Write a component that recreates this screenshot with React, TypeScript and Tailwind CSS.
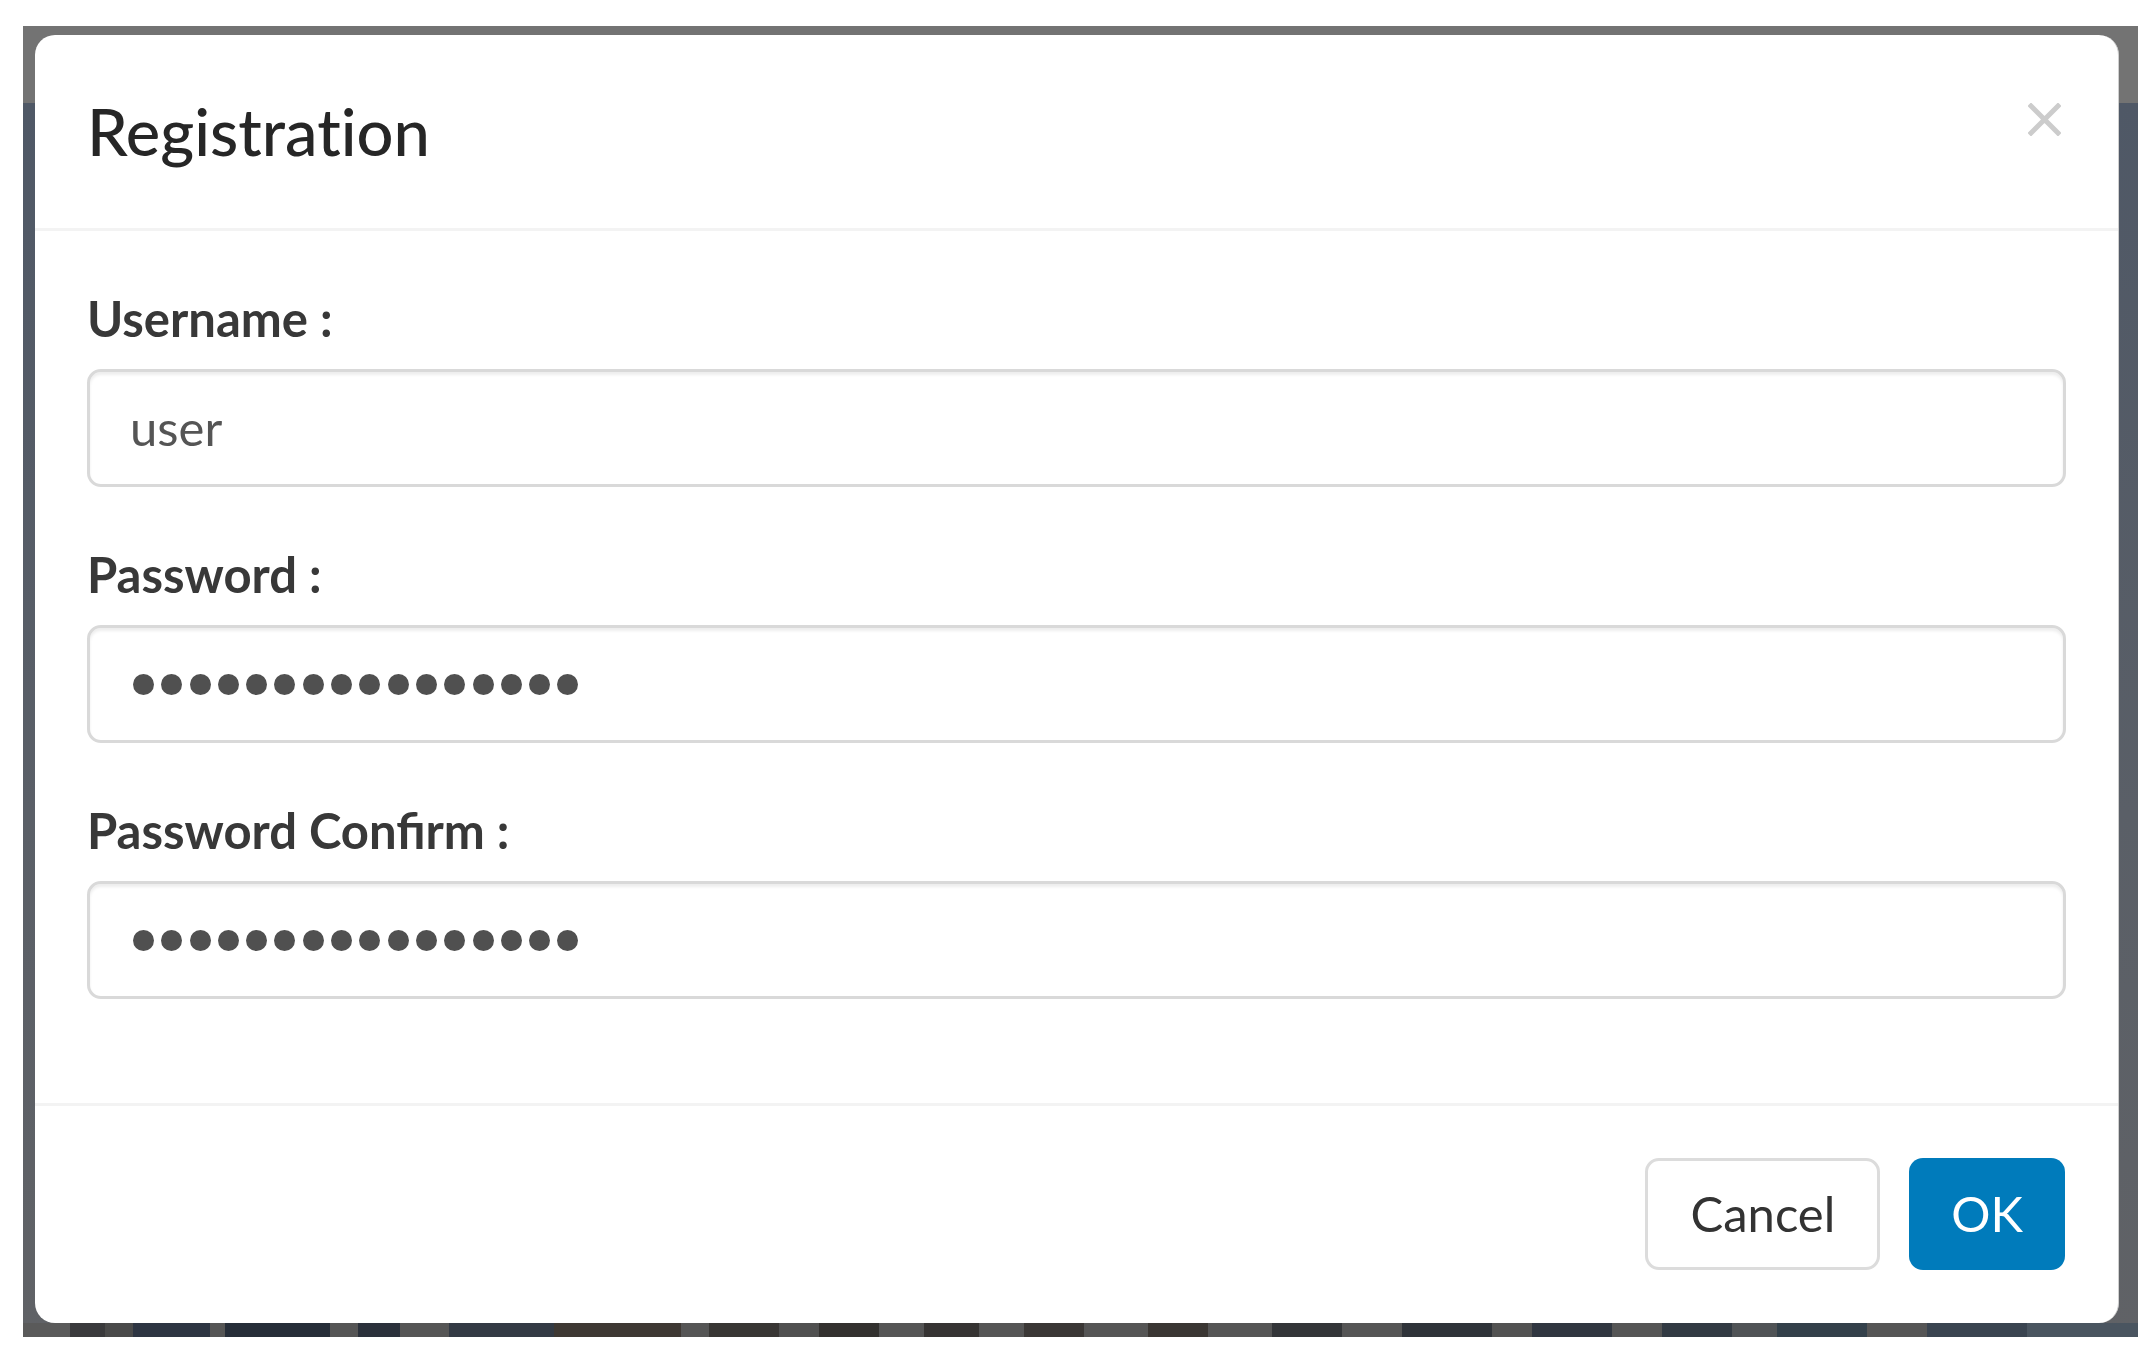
import React from "react";

const stripBlocks: { w: number; c: string }[] = [
  { w: 47, c: "#5a5a5a" },
  { w: 35, c: "#3a3a3c" },
  { w: 28, c: "#4a4a4a" },
  { w: 77, c: "#2e3542" },
  { w: 15, c: "#555555" },
  { w: 105, c: "#262d38" },
  { w: 28, c: "#555555" },
  { w: 42, c: "#2b313b" },
  { w: 49, c: "#555555" },
  { w: 105, c: "#333a44" },
  { w: 127, c: "#3e3833" },
  { w: 28, c: "#555555" },
  { w: 70, c: "#383634" },
  { w: 40, c: "#505050" },
  { w: 60, c: "#33312f" },
  { w: 45, c: "#555555" },
  { w: 55, c: "#363433" },
  { w: 45, c: "#555555" },
  { w: 60, c: "#3a3735" },
  { w: 64, c: "#555555" },
  { w: 60, c: "#3a3633" },
  { w: 64, c: "#555555" },
  { w: 70, c: "#333538" },
  { w: 60, c: "#555555" },
  { w: 90, c: "#2f3339" },
  { w: 40, c: "#525252" },
  { w: 80, c: "#303640" },
  { w: 50, c: "#555555" },
  { w: 70, c: "#323a43" },
  { w: 45, c: "#505356" },
  { w: 90, c: "#33404a" },
  { w: 60, c: "#555555" },
  { w: 100, c: "#3a4450" },
];

function Dots() {
  return (
    <div className="flex items-center gap-[7.3px] pl-[3px]">
      {Array.from({ length: 16 }).map((_, i) => (
        <span key={i} className="block w-[21px] h-[21px] rounded-full bg-[#505050]" />
      ))}
    </div>
  );
}

function Field({ label, children }: { label: string; children: React.ReactNode }) {
  return (
    <div className="mb-[52px]">
      <div className="h-[70px] leading-[70px] mb-[16px] text-[49px] font-bold text-[#383838]">{label}</div>
      <div className="h-[118px] border-[3px] border-[#d9d9d9] rounded-[14px] shadow-[inset_0_3px_3px_rgba(0,0,0,0.07)] flex items-center pl-[40px] pr-[40px]">
        {children}
      </div>
    </div>
  );
}

export default function App() {
  return (
    <div className="w-[2155px] h-[1356px] bg-white pt-[26px] pl-[23px] font-['Lato',sans-serif]">
      <div className="w-[2115px] h-[1311px] flex flex-col bg-[linear-gradient(to_bottom,#737373_0px,#737373_77px,#4f5866_77px,#5a5f67_60%,#606266_100%)]">
        <div className="flex-1 flex pl-[12px] pr-[19px] pt-[9px]">
          <div className="flex-1 h-[1288px] bg-white rounded-[20px] flex flex-col border-r border-[#cfcfcf]">
            {/* header */}
            <div className="h-[196px] border-b-[3px] border-[#f3f3f3] flex items-start justify-between px-[52px] pt-[52px]">
              <h4 className="h-[89px] leading-[89px] text-[65px] font-medium text-[#262626] [font-variant-ligatures:no-common-ligatures]">Registration</h4>
              <button className="mt-[16px] mr-[5px] w-[33px] h-[33px]" aria-label="Close">
                <svg width="33" height="33" viewBox="0 0 33 33">
                  <path d="M3 3 L30 30 M30 3 L3 30" stroke="#cccccc" strokeWidth="5" strokeLinecap="square" />
                </svg>
              </button>
            </div>
            {/* body */}
            <div className="h-[872px] p-[52px]">
              <Field label="Username :">
                <span className="text-[49px] text-[#555]">user</span>
              </Field>
              <Field label="Password :">
                <Dots />
              </Field>
              <Field label="Password Confirm :">
                <Dots />
              </Field>
            </div>
            {/* footer */}
            <div className="flex-1 border-t-[3px] border-[#f3f3f3] flex justify-end items-start gap-[29px] px-[53px] pt-[52px]">
              <button className="h-[112px] px-[42px] border-[3px] border-[#dcdcdc] rounded-[14px] bg-white text-[49px] text-[#333]">
                Cancel
              </button>
              <button className="h-[112px] px-[42px] rounded-[14px] bg-[#007bbb] text-[49px] text-white">
                OK
              </button>
            </div>
          </div>
        </div>
        <div className="h-[14px] flex">
          {stripBlocks.map((b, i) => (
            <div key={i} className="h-full" style={{ width: b.w, backgroundColor: b.c }} />
          ))}
          <div className="flex-1 h-full bg-[#4a5560]" />
        </div>
      </div>
    </div>
  );
}
